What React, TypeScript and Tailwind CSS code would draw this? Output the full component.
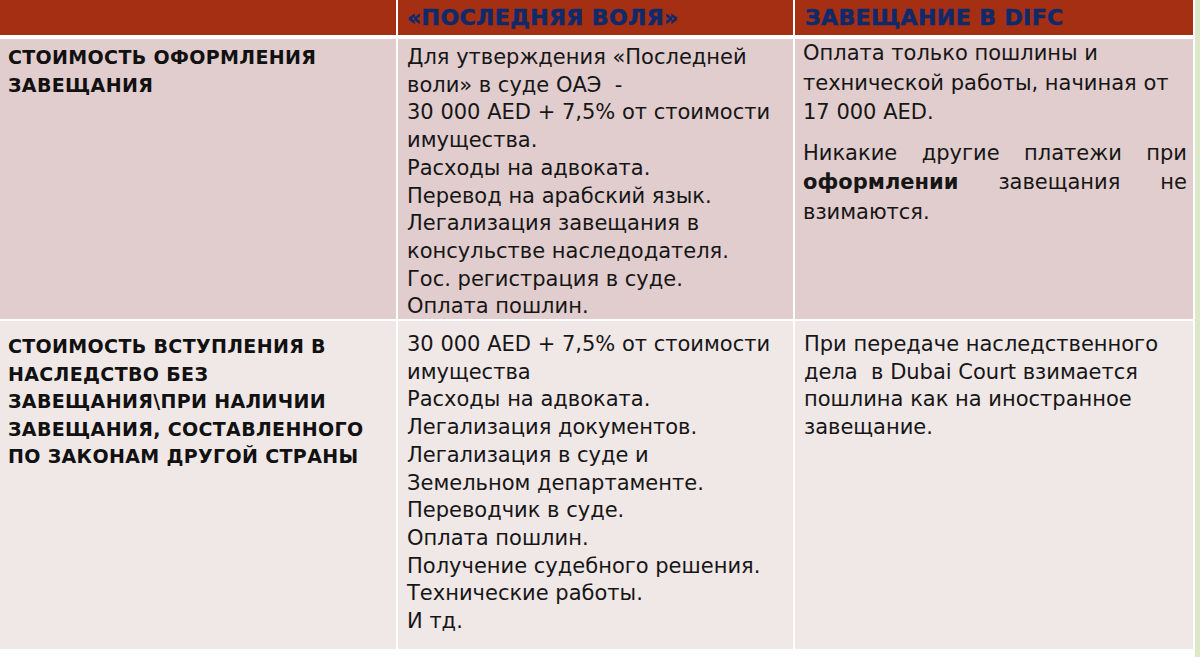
export default function App() {
  const body = "font-['DejaVu_Sans',sans-serif] text-[21px] leading-[27.7px] text-[#161616]"
  const label = "font-['DejaVu_Sans',sans-serif] font-bold text-[19px] leading-[27.5px] text-[#111] tracking-[0.35px]"
  const head = "font-['DejaVu_Sans',sans-serif] font-bold text-[22px] leading-[35px] text-[#0f2a6b] tracking-[0.4px] [-webkit-text-stroke:0.6px_#0f2a6b]"

  return (
    <div className="w-[1200px] h-[657px] bg-white flex overflow-hidden">
      <div className="w-[1193px] grid grid-cols-[396px_395px_398px] grid-rows-[35px_284px_330px] gap-x-[2px]">
        {/* header */}
        <div className="bg-[#a52f13]" />
        <div className="bg-[#a52f13] pl-[9px]">
          <span className={head}>«ПОСЛЕДНЯЯ ВОЛЯ»</span>
        </div>
        <div className="bg-[#a52f13] pl-[10px]">
          <span className={head}>ЗАВЕЩАНИЕ В DIFC</span>
        </div>

        {/* row 1 */}
        <div className="bg-[#e1cdcd] mt-[4px] pl-[8px] pt-[5px]">
          <p className={label}>СТОИМОСТЬ ОФОРМЛЕНИЯ<br />ЗАВЕЩАНИЯ</p>
        </div>
        <div className="bg-[#e1cdcd] mt-[4px] pl-[9px] pt-[5px]">
          <p className={body}>
            Для утверждения «Последней<br />
            воли» в суде ОАЭ&nbsp; -<br />
            30 000 AED + 7,5% от стоимости<br />
            имущества.<br />
            Расходы на адвоката.<br />
            Перевод на арабский язык.<br />
            Легализация завещания в<br />
            консульстве наследодателя.<br />
            Гос. регистрация в суде.<br />
            Оплата пошлин.
          </p>
        </div>
        <div className="bg-[#e1cdcd] mt-[4px] pl-[8px] pr-[6px]">
          <p className={`${body} leading-[29.5px]`}>
            Оплата только пошлины и<br />
            технической работы, начиная от<br />
            17 000 AED.
          </p>
          {/* justified paragraph, laid out line by line */}
          <div className={`${body} leading-[29.5px] mt-[11px]`}>
            <div className="flex justify-between">
              <span>Никакие</span><span>другие</span><span>платежи</span><span>при</span>
            </div>
            <div className="flex justify-between">
              <span className="font-bold">оформлении</span><span>завещания</span><span>не</span>
            </div>
            <div>взимаются.</div>
          </div>
        </div>

        {/* row 2 */}
        <div className="bg-[#f0e7e7] mt-[2px] pl-[8px] pt-[12px]">
          <p className={label}>
            СТОИМОСТЬ ВСТУПЛЕНИЯ В<br />
            НАСЛЕДСТВО БЕЗ<br />
            ЗАВЕЩАНИЯ\ПРИ НАЛИЧИИ<br />
            ЗАВЕЩАНИЯ, СОСТАВЛЕННОГО<br />
            ПО ЗАКОНАМ ДРУГОЙ СТРАНЫ
          </p>
        </div>
        <div className="bg-[#f0e7e7] mt-[2px] pl-[9px] pt-[10px]">
          <p className={body}>
            30 000 AED + 7,5% от стоимости<br />
            имущества<br />
            Расходы на адвоката.<br />
            Легализация документов.<br />
            Легализация в суде и<br />
            Земельном департаменте.<br />
            Переводчик в суде.<br />
            Оплата пошлин.<br />
            Получение судебного решения.<br />
            Технические работы.<br />
            И тд.
          </p>
        </div>
        <div className="bg-[#f0e7e7] mt-[2px] pl-[9px] pt-[10px]">
          <p className={body}>
            При передаче наследственного<br />
            дела&nbsp; в Dubai Court взимается<br />
            пошлина как на иностранное<br />
            завещание.
          </p>
        </div>
      </div>
      <div className="w-[2px]" />
      <div className="w-[5px] bg-[#dde8c9]" />
    </div>
  )
}
